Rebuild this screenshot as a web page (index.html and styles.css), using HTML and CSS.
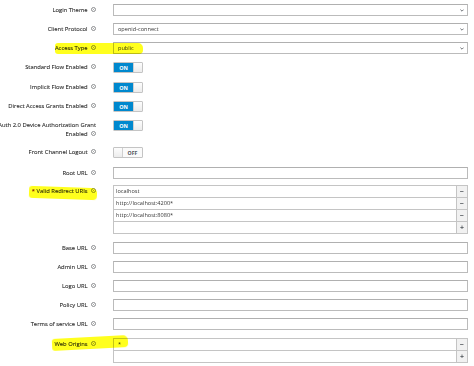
FILE: index.html
```html
<!DOCTYPE html>
<html>
<head>
<meta charset="utf-8">
<link rel="stylesheet" href="styles.css">
</head>
<body>
<div class="form">
  <div class="row sp7">
    <label class="lbl">Login Theme <i class="help"></i></label>
    <div class="select"><svg class="chev" viewBox="0 0 4 3"><polyline points="0.4,0.6 2,2.2 3.6,0.6"/></svg></div>
  </div>
  <div class="row sp7">
    <label class="lbl">Client Protocol <i class="help"></i></label>
    <div class="select"><span class="val">openid-connect</span><svg class="chev" viewBox="0 0 4 3"><polyline points="0.4,0.6 2,2.2 3.6,0.6"/></svg></div>
  </div>
  <div class="row sp8">
    <label class="lbl">Access Type <i class="help"></i></label>
    <div class="select"><span class="val">public</span><svg class="chev" viewBox="0 0 4 3"><polyline points="0.4,0.6 2,2.2 3.6,0.6"/></svg></div>
    <span class="hl hl-access"></span>
  </div>
  <div class="row tg sp9">
    <label class="lbl">Standard Flow Enabled <i class="help"></i></label>
    <div class="switch"><span class="sw-on">ON</span><span class="knob"></span></div>
  </div>
  <div class="row tg sp8">
    <label class="lbl">Implicit Flow Enabled <i class="help"></i></label>
    <div class="switch"><span class="sw-on">ON</span><span class="knob"></span></div>
  </div>
  <div class="row tg sp8">
    <label class="lbl">Direct Access Grants Enabled <i class="help"></i></label>
    <div class="switch"><span class="sw-on">ON</span><span class="knob"></span></div>
  </div>
  <div class="row tg two sp8">
    <label class="lbl">OAuth 2.0 Device Authorization Grant<br>Enabled <i class="help"></i></label>
    <div class="switch"><span class="sw-on">ON</span><span class="knob"></span></div>
  </div>
  <div class="row tg sp9">
    <label class="lbl">Front Channel Logout <i class="help"></i></label>
    <div class="switch"><span class="knob knob-off"></span><span class="sw-off">OFF</span></div>
  </div>
  <div class="row sp6">
    <label class="lbl">Root URL <i class="help"></i></label>
    <div class="input"></div>
  </div>
  <div class="row multi sp8">
    <label class="lbl"><span class="req">*</span> Valid Redirect URIs <i class="help"></i></label>
    <div class="mv">
      <div class="mv-row"><span class="mv-val">localhost</span><span class="mv-btn">&minus;</span></div>
      <div class="mv-row"><span class="mv-val">http://localhost:4200*</span><span class="mv-btn">&minus;</span></div>
      <div class="mv-row"><span class="mv-val">http://localhost:8080*</span><span class="mv-btn">&minus;</span></div>
      <div class="mv-row"><span class="mv-val"></span><span class="mv-btn">+</span></div>
    </div>
    <span class="hl hl-redirect"></span>
  </div>
  <div class="row sp7">
    <label class="lbl">Base URL <i class="help"></i></label>
    <div class="input"></div>
  </div>
  <div class="row sp7">
    <label class="lbl">Admin URL <i class="help"></i></label>
    <div class="input"></div>
  </div>
  <div class="row sp7">
    <label class="lbl">Logo URL <i class="help"></i></label>
    <div class="input"></div>
  </div>
  <div class="row sp7">
    <label class="lbl">Policy URL <i class="help"></i></label>
    <div class="input"></div>
  </div>
  <div class="row sp8">
    <label class="lbl">Terms of service URL <i class="help"></i></label>
    <div class="input"></div>
  </div>
  <div class="row multi">
    <label class="lbl lbl-wo">Web Origins <i class="help"></i></label>
    <div class="mv">
      <div class="mv-row"><span class="mv-val wo">*</span><span class="mv-btn">&minus;</span></div>
      <div class="mv-row"><span class="mv-val"></span><span class="mv-btn">+</span></div>
    </div>
    <span class="hl hl-web"></span>
  </div>
</div>
</body>
</html>
```

FILE: styles.css
```css
html, body {
  margin: 0;
  padding: 0;
  background: #fff;
}
body {
  font-family: "Open Sans", "Liberation Sans", sans-serif;
  color: #363636;
  overflow: hidden;
}
.form {
  display: flex;
  flex-direction: column;
  padding-top: 4px;
  margin-left: -30px;
}
.row {
  position: relative;
  display: grid;
  grid-template-columns: 126px 355px;
  column-gap: 17px;
  align-items: start;
}
.sp6 { margin-bottom: 6px; }
.sp7 { margin-bottom: 7px; }
.sp8 { margin-bottom: 8px; }
.sp9 { margin-bottom: 9px; }

.lbl {
  font-size: 5.85px;
  font-weight: 400;
  line-height: 12px;
  text-align: right;
  white-space: nowrap;
  color: #2b2b2b;
  -webkit-text-stroke: 0.1px #2b2b2b;
}
.tg .lbl { line-height: 11px; }
.two .lbl {
  line-height: 9px;
  padding-top: 1px;
}
.multi .lbl { line-height: 13px; }
.req { color: #b00; }

.help {
  display: inline-block;
  width: 3.4px;
  height: 3.4px;
  border: 0.7px solid #8b8d8f;
  border-radius: 50%;
  vertical-align: 0px;
  margin-left: 1.5px;
  position: relative;
  -webkit-text-stroke: 0;
}
.help::after {
  content: "";
  position: absolute;
  left: 1.1px;
  top: 1.1px;
  width: 1.2px;
  height: 1.2px;
  border-radius: 50%;
  background: #8b8d8f;
}

.select, .input {
  box-sizing: border-box;
  height: 12px;
  border: 1px solid #bbbbbb;
  border-top-color: #b0b0b0;
  background: #fff;
  display: flex;
  align-items: center;
  position: relative;
}
.val {
  font-size: 5.6px;
  padding-left: 4px;
  color: #363636;
}
.chev {
  position: absolute;
  right: 3px;
  top: 3.5px;
  width: 4px;
  height: 3px;
  fill: none;
  stroke: #4d5258;
  stroke-width: 0.8;
}

.switch {
  box-sizing: border-box;
  display: flex;
  width: 30px;
  height: 11px;
  border: 1px solid #c4c4c4;
  border-radius: 1px;
  overflow: hidden;
  background: #fff;
}
.sw-on {
  width: 19px;
  background: #0088ce;
  color: #fff;
  font-size: 5.4px;
  font-weight: 700;
  display: flex;
  align-items: center;
  justify-content: center;
}
.knob {
  flex: 1;
  background: linear-gradient(#fdfdfd, #ececec);
  border-left: 1px solid #d0d0d0;
}
.knob-off {
  flex: none;
  width: 8px;
  border-left: none;
  border-right: 1px solid #d0d0d0;
}
.sw-off {
  flex: 1;
  background: #fafafa;
  color: #4d5258;
  font-size: 5.2px;
  font-weight: 700;
  display: flex;
  align-items: center;
  justify-content: center;
}

.mv {
  display: flex;
  flex-direction: column;
}
.mv-row {
  box-sizing: border-box;
  height: 13px;
  border: 1px solid #c4c4c4;
  display: flex;
  align-items: stretch;
  background: #fff;
}
.mv-row + .mv-row { margin-top: -1px; }
.mv-val {
  flex: 1;
  font-size: 5.6px;
  line-height: 11px;
  padding-left: 2px;
  color: #363636;
}
.mv-val.wo { padding-left: 4px; }
.mv-btn {
  width: 10px;
  border-left: 1px solid #c4c4c4;
  background: #f1f1f1;
  font-size: 7px;
  font-weight: 700;
  line-height: 11px;
  text-align: center;
  color: #4d5258;
}

.hl {
  position: absolute;
  background: #ffff1e;
  mix-blend-mode: multiply;
  border-radius: 3px 5px 4px 3px;
  filter: blur(0.4px);
}
.hl-access {
  left: 85px;
  top: 1px;
  width: 88px;
  height: 11px;
}
.hl-redirect {
  left: 59px;
  top: 2px;
  width: 68px;
  height: 12px;
  transform: rotate(2deg);
}
.hl-web {
  left: 82px;
  top: -1px;
  width: 76px;
  height: 12px;
  transform: rotate(-3deg);
}
```
